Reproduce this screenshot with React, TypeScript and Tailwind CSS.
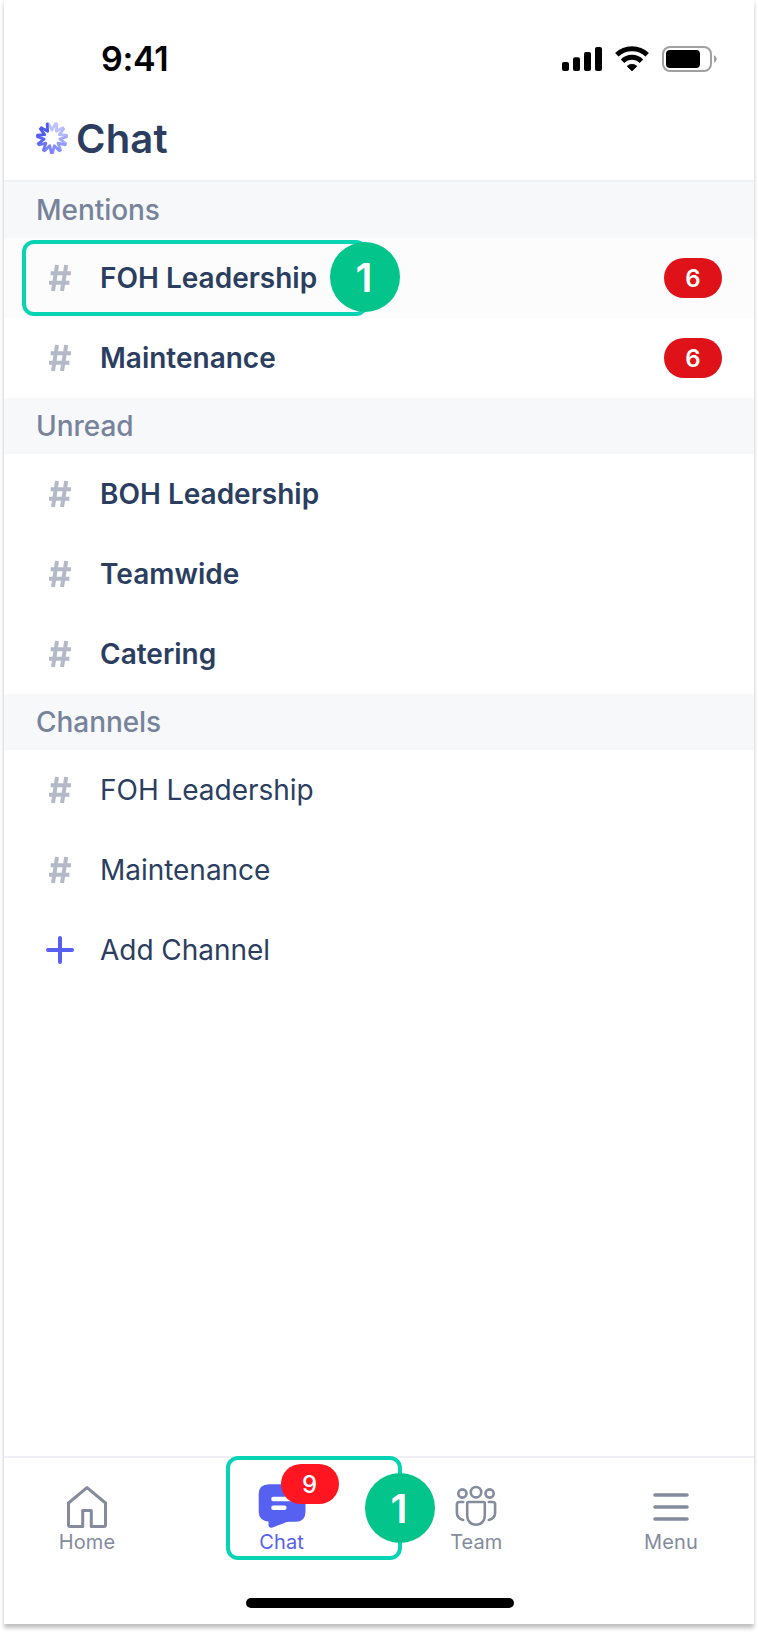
import type { ReactNode } from "react";
import clsx from "clsx";

type Tone = "strong" | "normal";

interface Channel {
  name: string;
  unread?: number;
  active?: boolean;
}

interface Section {
  title: string;
  tone: Tone;
  channels: Channel[];
}

const SECTIONS: Section[] = [
  {
    title: "Mentions",
    tone: "strong",
    channels: [
      { name: "FOH Leadership", unread: 6, active: true },
      { name: "Maintenance", unread: 6 },
    ],
  },
  {
    title: "Unread",
    tone: "strong",
    channels: [
      { name: "BOH Leadership" },
      { name: "Teamwide" },
      { name: "Catering" },
    ],
  },
  {
    title: "Channels",
    tone: "normal",
    channels: [{ name: "FOH Leadership" }, { name: "Maintenance" }],
  },
];

// Clockwise from the top.
const PETAL_COLORS = [
  "#bcc1ff",
  "#bcc1ff",
  "#b4baff",
  "#a3aaff",
  "#949bff",
  "#868eff",
  "#7b83fb",
  "#6d75f8",
  "#5f67f5",
  "#525bf2",
  "#4f58f1",
];

function petalPath(index: number): string {
  const step = (Math.PI * 2) / 11;
  const angle = index * step;
  const point = (radius: number, a: number) =>
    `${(16 + radius * Math.sin(a)).toFixed(2)} ${(16 - radius * Math.cos(a)).toFixed(2)}`;
  return `M${point(14.8, angle - step * 0.42)}L${point(8, angle)}L${point(14.8, angle + step * 0.42)}`;
}

function Logo() {
  return (
    <svg width="32" height="32" viewBox="0 0 32 32" fill="none">
      {PETAL_COLORS.map((color, i) => (
        <path
          key={i}
          d={petalPath(i)}
          stroke={color}
          strokeWidth="2.8"
          strokeLinecap="round"
          strokeLinejoin="round"
        />
      ))}
    </svg>
  );
}

function StatusBar() {
  return (
    <div className="flex h-[88px] items-end justify-between pr-[37px] pb-4 pl-[97px]">
      <span className="text-[34px] leading-[26px] font-semibold tracking-[-0.3px] text-black">
        9:41
      </span>
      <svg width="155" height="26" viewBox="0 0 155 26" fill="none">
        <g fill="#000">
          <rect x="0" y="16" width="7" height="9" rx="2" />
          <rect x="11" y="11.3" width="7" height="13.7" rx="2" />
          <rect x="22" y="6" width="7" height="19" rx="2" />
          <rect x="33" y="1" width="7" height="24" rx="2" />
        </g>
        <g stroke="#000" strokeWidth="5">
          <path d="M54.8 8.8a22 22 0 0 1 30.4 0" />
          <path d="M60.6 15.2a13.4 13.4 0 0 1 18.8 0" />
        </g>
        <path
          d="M65.2 20.2a7.2 7.2 0 0 1 9.6 0L70 25z"
          fill="#000"
          stroke="#000"
          strokeWidth=".8"
          strokeLinejoin="round"
        />
        <rect
          x="101"
          y="1"
          width="48"
          height="24"
          rx="7"
          stroke="#a0a0a0"
          strokeWidth="2"
        />
        <rect x="104" y="4" width="34" height="18" rx="4" fill="#000" />
        <path d="M152 9.3c3.6 1.8 3.6 5.6 0 7.4z" fill="#a0a0a0" />
      </svg>
    </div>
  );
}

function HashIcon() {
  return (
    <svg width="24" height="28" viewBox="0 0 24 28" fill="none">
      <path
        d="M9 1 5 27M18.200 1l-4.200 26M2.600 9.200h20.400M1 18.800h20.400"
        stroke="#b3b9c6"
        strokeWidth="4"
      />
    </svg>
  );
}

function PlusIcon() {
  return (
    <svg width="28" height="28" viewBox="0 0 28 28" fill="none">
      <path
        d="M14 2v24M2 14h24"
        stroke="#5560f0"
        strokeWidth="4"
        strokeLinecap="round"
      />
    </svg>
  );
}

function Row({
  icon,
  name,
  tone,
  unread,
  active,
}: Channel & { icon: ReactNode; tone: Tone }) {
  return (
    <li
      className={clsx(
        "relative flex h-20 items-center px-8",
        active && "bg-[#fcfcfc]",
      )}
    >
      <span className="flex w-12 justify-center">{icon}</span>
      <span
        className={clsx(
          "ml-4 flex-1 text-[28px] leading-8 text-[#2b3e5f]",
          tone === "strong" ? "font-semibold" : "font-normal tracking-[-0.03px]",
        )}
      >
        {name}
      </span>
      {unread ? (
        <span className="flex h-10 w-[58px] items-center justify-center rounded-full bg-[#df1119] pt-px text-2xl font-semibold text-white">
          {unread}
        </span>
      ) : null}
      {active ? (
        <>
          <span className="absolute top-0.5 left-[18px] h-[76px] w-[346px] rounded-xl border-4 border-[#08d3b3]" />
          <Step className="top-1 left-[326px]" />
        </>
      ) : null}
    </li>
  );
}

function Step({ className }: { className: string }) {
  return (
    <span
      className={clsx(
        "absolute z-10 flex size-[70px] items-center justify-center rounded-full bg-[#03c48b] pt-0.5 pr-0.5 text-[40px] leading-none font-semibold text-white",
        className,
      )}
    >
      1
    </span>
  );
}

function HomeIcon() {
  return (
    <svg width="48" height="48" viewBox="0 0 48 48" fill="none">
      <path
        d="M5.5 21 24 5.6 42.5 21V43a1.5 1.5 0 0 1-1.5 1.5H28.3v-16h-8.6v16H7A1.5 1.5 0 0 1 5.5 43z"
        stroke="#838b9d"
        strokeWidth="3"
        strokeLinejoin="round"
      />
    </svg>
  );
}

function ChatIcon() {
  return (
    <svg width="48" height="48" viewBox="0 0 48 48" fill="none">
      <path
        d="M11 2.2h26.500q10 0 10 10V29.700q0 10-10 10H31q-3 0-6 1.700l-10.500 4.200q-4 1-4-2.800v-3.300Q.7 38.500.7 29.500V12.200q0-10 10.300-10z"
        fill="#5661f1"
      />
      <path
        d="M15.4 17h18M15.4 25.700h11"
        stroke="#fff"
        strokeWidth="4.4"
        strokeLinecap="round"
      />
    </svg>
  );
}

function TeamIcon() {
  return (
    <svg width="48" height="48" viewBox="0 0 48 48" fill="none">
      <g stroke="#838b9d" strokeWidth="2.6" strokeLinecap="round">
        <circle cx="24" cy="10.2" r="5.2" />
        <circle cx="10.4" cy="11.5" r="4.1" />
        <circle cx="37.6" cy="11.5" r="4.1" />
        <path
          d="M16.7 20h14.600q1.500 0 1.500 1.500V34a8.800 8.800 0 0 1-17.600 0V21.500q0-1.500 1.500-1.500z"
          strokeLinejoin="round"
        />
        <path d="M11.2 20H7.200q-2.300 0-2.300 2.300v8.200q0 6 6.300 7.500" />
        <path d="M36.8 20h4q2.300 0 2.300 2.300v8.200q0 6-6.300 7.500" />
      </g>
    </svg>
  );
}

function MenuIcon() {
  return (
    <svg width="48" height="48" viewBox="0 0 48 48" fill="none">
      <path
        d="M8 13h32M8 25h32M8 37h32"
        stroke="#838b9d"
        strokeWidth="3.6"
        strokeLinecap="round"
      />
    </svg>
  );
}

function Tab({
  label,
  active,
  children,
}: {
  label: string;
  active?: boolean;
  children: ReactNode;
}) {
  return (
    <div
      className={clsx(
        "relative flex w-[100px] flex-col items-center text-xl leading-6 tracking-[0.1px]",
        active ? "text-[#5661f1]" : "text-[#838b9d]",
      )}
    >
      {children}
      <span>{label}</span>
    </div>
  );
}

export default function App() {
  return (
    <div className="h-[1632px] w-[758px] overflow-hidden bg-white px-1 font-['Inter',sans-serif]">
      <div className="flex h-[1624px] w-[750px] flex-col bg-white shadow-[0_4px_4px_rgba(0,0,0,0.25)]">
        <StatusBar />

        <header className="flex h-[94px] items-center gap-2 border-b-2 border-[#f0f1f3] px-8 pt-2">
          <Logo />
          <h1 className="pt-0.5 text-[40px] leading-none font-semibold tracking-[0.2px] text-[#2b3e5f]">
            Chat
          </h1>
        </header>

        <main className="flex-1">
          {SECTIONS.map((section) => (
            <section key={section.title}>
              <h2 className="flex h-14 items-center bg-[#f7f8fa] px-8 text-[28px] font-medium tracking-[-0.05px] text-[#76839a]">
                {section.title}
              </h2>
              <ul>
                {section.channels.map((channel) => (
                  <Row
                    key={channel.name}
                    {...channel}
                    tone={section.tone}
                    icon={<HashIcon />}
                  />
                ))}
                {section.title === "Channels" ? (
                  <Row name="Add Channel" tone="normal" icon={<PlusIcon />} />
                ) : null}
              </ul>
            </section>
          ))}
        </main>

        <nav className="relative flex h-[142px] justify-between border-t-2 border-[#efeff5] px-[33px] pt-6">
          <Tab label="Home">
            <HomeIcon />
          </Tab>
          <Tab label="Chat" active>
            <ChatIcon />
            <span className="absolute -top-[18px] left-[49px] flex h-10 w-[58px] items-center justify-center rounded-full bg-[#ff1620] pt-px text-2xl font-medium text-white">
              9
            </span>
          </Tab>
          <Tab label="Team">
            <TeamIcon />
          </Tab>
          <Tab label="Menu">
            <MenuIcon />
          </Tab>
          <span className="absolute -top-0.5 left-[222px] h-[104px] w-44 rounded-xl border-4 border-[#08d3b3]" />
          <Step className="top-[15px] left-[361px]" />
        </nav>

        <div className="flex h-[26px] justify-center pl-0.5">
          <span className="h-2.5 w-[268px] rounded-full bg-black" />
        </div>
      </div>
    </div>
  );
}
